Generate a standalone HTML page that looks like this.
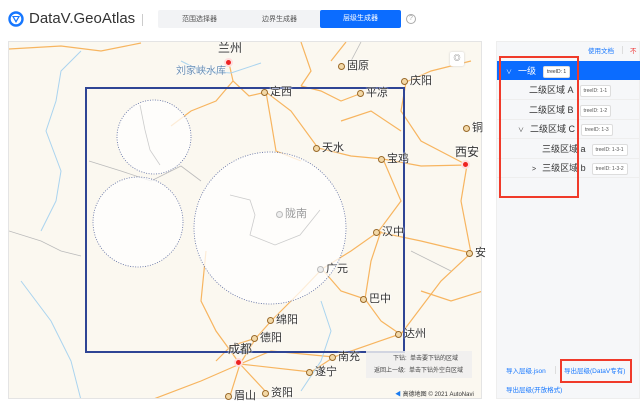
<!DOCTYPE html>
<html><head><meta charset="utf-8"><style>
*{margin:0;padding:0;box-sizing:border-box}
body{width:640px;height:404px;background:#fff;font-family:"Liberation Sans","Noto Sans CJK SC",sans-serif;position:relative;overflow:hidden}
.abs{position:absolute}
.cn{font-family:"Liberation Sans","Noto Sans CJK SC",sans-serif}
.city{position:absolute;font-size:11px;color:#333;white-space:nowrap;line-height:12px;text-shadow:0 0 2px #fff,0 0 2px #fff}
.dot{display:inline-block;width:7px;height:7px;border-radius:50%;border:1.5px solid #9a6a2a;background:#f3d9a8;vertical-align:-1px;margin-right:2px}
.tree{position:absolute;left:497px;width:143px;height:20px;font-size:9px;color:#333;line-height:20px;white-space:nowrap;overflow:hidden}
.tag{display:inline-block;border:1px solid #ddd;background:#fff;font-size:5px;line-height:10px;padding:0 3px;border-radius:2px;color:#555;vertical-align:1px}
</style></head><body>
<svg class="abs" style="left:8px;top:11px" width="16" height="16" viewBox="0 0 16 16"><circle cx="8" cy="8" r="6.5" fill="none" stroke="#1677ff" stroke-width="2.4"/><path d="M4 5 L8 12 L12 5 Z" fill="#1677ff"/><path d="M6 6 L8 9.5 L10 6Z" fill="#fff"/></svg>
<div class="abs" style="left:29px;top:10px;font-size:15px;color:#333">DataV.GeoAtlas</div>
<div class="abs" style="left:142px;top:14px;width:1px;height:12px;background:#ccc"></div>
<div class="abs" style="left:158px;top:10px;width:243px;height:18px;background:#f2f3f5;border-radius:2px"></div>
<div class="abs cn" style="left:182px;top:14px;font-size:7px;color:#555">范围选择器</div>
<div class="abs cn" style="left:262px;top:14px;font-size:7px;color:#555">边界生成器</div>
<div class="abs cn" style="left:320px;top:10px;width:81px;height:18px;background:#0b6cff;border-radius:2px;color:#fff;font-size:7px;text-align:center;line-height:18px">层级生成器</div>
<div class="abs" style="left:406px;top:14px;width:10px;height:10px;border:1px solid #aaa;border-radius:50%;font-size:7px;color:#aaa;text-align:center;line-height:8px">?</div>

<div class="abs" style="left:8px;top:41px;width:474px;height:358px;background:#fbf8f0;border:1px solid #e4e4e4;overflow:hidden">
<svg width="474" height="358" viewBox="8 41 474 358" style="position:absolute;left:0;top:0">
<g fill="none" stroke="#f7b560" stroke-width="1.2">
<path d="M8 48 L60 45 L100 50 L140 42"/>
<path d="M228 62 L232 80 L248 95 L265 91 L290 110 L317 147 L350 155 L382 158 L420 165 L466 164"/>
<path d="M265 91 L270 120 L275 150 L300 160"/>
<path d="M232 80 L215 100 L190 110 L170 125"/>
<path d="M361 92 L340 100 L320 90 L300 85"/>
<path d="M405 81 L430 70 L470 60"/>
<path d="M405 81 L400 110 L420 140 L466 164"/>
<path d="M466 164 L460 200 L470 252 L440 280 L400 333"/>
<path d="M382 158 L400 200 L377 231 L350 250 L321 268 L300 290 L271 319 L255 337 L239 363"/>
<path d="M377 231 L420 240 L470 252"/>
<path d="M321 268 L340 290 L364 298 L380 320 L399 333"/>
<path d="M239 363 L270 350 L333 356 L399 333"/>
<path d="M239 363 L266 392"/><path d="M239 363 L229 395"/><path d="M239 363 L310 371 L333 356"/>
<path d="M239 363 L200 380 L150 399"/>
<path d="M205 250 L200 300 L215 330 L239 363"/>
<path d="M330 60 L345 41"/><path d="M300 41 L310 70 L300 85"/>
<path d="M340 120 L370 110 L400 130"/>
<path d="M364 298 L370 260 L380 230"/>
<path d="M420 290 L450 300 L482 290"/>
<path d="M255 337 L230 345 L215 360"/>
</g>
<g fill="none" stroke="#aad4ef" stroke-width="1">
<path d="M80 50 L60 70 L55 100 L45 130 L60 170 L55 200 L40 230"/>
<path d="M180 60 L200 70 L230 72 L260 62"/>
<path d="M20 280 L50 320 L70 360 L80 399"/>
<path d="M300 390 L320 360 L330 330 L320 300"/>
</g>
<g fill="none" stroke="#bbb" stroke-width="0.8">
<path d="M8 230 L40 240 L60 250 L80 255"/>
<path d="M88 160 L120 170 L150 180 L180 165 L200 180"/>
<path d="M350 60 L360 41"/>
<path d="M410 250 L430 260 L450 270"/>
</g>
</svg>
<div class="abs" style="left:441px;top:10px;width:14px;height:14px;background:#fff;border-radius:2px;box-shadow:0 0 2px #ccc;font-size:7px;text-align:center;line-height:14px;color:#555">◎</div>
</div>
<svg class="abs" style="left:0;top:0" width="482" height="400">
<circle cx="154" cy="137" r="37" fill="rgba(255,255,255,0.75)" stroke="#5a6aa0" stroke-width="0.8" stroke-dasharray="1 1.5"/>
<circle cx="138" cy="222" r="45" fill="rgba(255,255,255,0.75)" stroke="#5a6aa0" stroke-width="0.8" stroke-dasharray="1 1.5"/>
<circle cx="270" cy="228" r="76" fill="rgba(255,255,255,0.75)" stroke="#5a6aa0" stroke-width="0.8" stroke-dasharray="1 1.5"/>
<path d="M230 195 L250 200 L255 215 L250 235 L275 245 L300 235 L320 210" fill="none" stroke="#ccc" stroke-width="0.8"/>
<path d="M140 105 L145 130 L150 150 L160 165" fill="none" stroke="#ccc" stroke-width="0.8"/>
<rect x="86" y="88" width="318" height="264" fill="none" stroke="#2f4595" stroke-width="2"/>
</svg>
<div class="city" style="left:218px;top:42px;font-size:12px">兰州</div>
<div class="abs" style="left:224px;top:58px;width:9px;height:9px;border-radius:50%;background:#e22;border:2px solid #fdd"></div>
<div class="city" style="left:176px;top:66px;color:#6a8fb5;font-size:10px">刘家峡水库</div>
<div class="city" style="left:338px;top:60px"><span class="dot"></span>固原</div>
<div class="city" style="left:401px;top:75px"><span class="dot"></span>庆阳</div>
<div class="city" style="left:261px;top:86px"><span class="dot"></span>定西</div>
<div class="city" style="left:357px;top:87px"><span class="dot"></span>平凉</div>
<div class="city" style="left:313px;top:142px"><span class="dot"></span>天水</div>
<div class="city" style="left:378px;top:153px"><span class="dot"></span>宝鸡</div>
<div class="city" style="left:463px;top:122px"><span class="dot"></span>铜</div>
<div class="city" style="left:455px;top:146px;font-size:12px">西安</div>
<div class="abs" style="left:461px;top:160px;width:9px;height:9px;border-radius:50%;background:#e22;border:2px solid #fdd"></div>
<div class="city" style="left:276px;top:208px;color:#999"><span class="dot" style="border-color:#bbb;background:#eee"></span>陇南</div>
<div class="city" style="left:373px;top:226px"><span class="dot"></span>汉中</div>
<div class="city" style="left:466px;top:247px"><span class="dot"></span>安</div>
<div class="city" style="left:317px;top:263px"><span class="dot" style="border-color:#bbb;background:#eee"></span>广元</div>
<div class="city" style="left:360px;top:293px"><span class="dot"></span>巴中</div>
<div class="city" style="left:267px;top:314px"><span class="dot"></span>绵阳</div>
<div class="city" style="left:251px;top:332px"><span class="dot"></span>德阳</div>
<div class="city" style="left:395px;top:328px"><span class="dot"></span>达州</div>
<div class="city" style="left:228px;top:343px;font-size:12px">成都</div>
<div class="abs" style="left:234px;top:358px;width:9px;height:9px;border-radius:50%;background:#e22;border:2px solid #fdd"></div>
<div class="city" style="left:329px;top:351px"><span class="dot"></span>南充</div>
<div class="city" style="left:306px;top:366px"><span class="dot"></span>遂宁</div>
<div class="city" style="left:262px;top:387px"><span class="dot"></span>资阳</div>
<div class="city" style="left:225px;top:390px"><span class="dot"></span>眉山</div>
<div class="abs cn" style="left:366px;top:351px;width:106px;height:27px;background:rgba(238,238,238,0.85);font-size:6px;color:#444;line-height:12px;padding:2px 0 0 0">
<div style="padding-left:27px">下钻:&nbsp;&nbsp;单击要下钻的区域</div>
<div style="padding-left:8px">返回上一级:&nbsp;&nbsp;单击下钻外空白区域</div></div>
<div class="abs cn" style="left:395px;top:389px;font-size:6px;color:#333"><span style="color:#1a7bf0">◀</span> 高德地图 © 2021 AutoNavi</div>

<div class="abs" style="left:496px;top:41px;width:144px;height:358px;background:#f6f7f9;border:1px solid #eee"></div>
<div class="abs cn" style="left:588px;top:45px;font-size:6.5px;color:#1677ff">使用文档</div>
<div class="abs" style="left:622px;top:46px;width:1px;height:8px;background:#ddd"></div>
<div class="abs cn" style="left:630px;top:45px;font-size:6.5px;color:#e33">不</div>
<div class="tree" style="top:61px;height:19px;background:#0b6cff;color:#fff"><span style="margin-left:9px;font-size:6px">∨</span><span style="margin-left:6px">一级</span><span class="tag" style="margin-left:7px;color:#333">treeID: 1</span></div>
<div class="tree" style="top:80px;border-bottom:1px solid #eee"><span style="margin-left:32px">二级区域 A</span><span class="tag" style="margin-left:6px">treeID: 1-1</span></div>
<div class="tree" style="top:100px;border-bottom:1px solid #eee"><span style="margin-left:32px">二级区域 B</span><span class="tag" style="margin-left:6px">treeID: 1-2</span></div>
<div class="tree" style="top:119px;border-bottom:1px solid #eee"><span style="margin-left:21px;font-size:6px">∨</span><span style="margin-left:6px">二级区域 C</span><span class="tag" style="margin-left:6px">treeID: 1-3</span></div>
<div class="tree" style="top:139px;border-bottom:1px solid #eee"><span style="margin-left:45px">三级区域 a</span><span class="tag" style="margin-left:6px">treeID: 1-3-1</span></div>
<div class="tree" style="top:158px;border-bottom:1px solid #eee"><span style="margin-left:35px;font-size:7px">&gt;</span><span style="margin-left:6px">三级区域 b</span><span class="tag" style="margin-left:6px">treeID: 1-3-2</span></div>
<div class="abs" style="left:499px;top:56px;width:80px;height:142px;border:2px solid #f03a2a"></div>
<div class="abs cn" style="left:506px;top:365px;font-size:6.5px;color:#1677ff">导入层级.json</div>
<div class="abs" style="left:555px;top:366px;width:1px;height:8px;background:#ddd"></div>
<div class="abs cn" style="left:564px;top:365px;font-size:6.5px;color:#1677ff">导出层级(DataV专有)</div>
<div class="abs" style="left:560px;top:359px;width:72px;height:24px;border:2px solid #f03a2a"></div>
<div class="abs cn" style="left:506px;top:384px;font-size:6.5px;color:#1677ff">导出层级(开放格式)</div>
</body></html>
